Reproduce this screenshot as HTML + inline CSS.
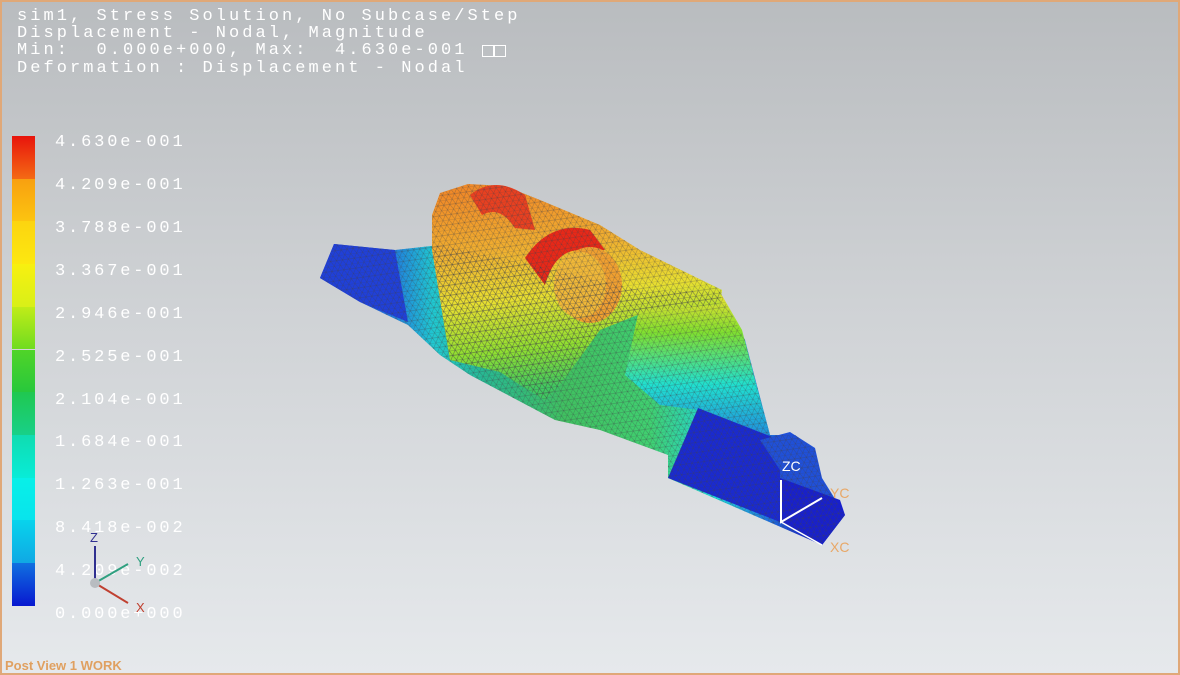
<!DOCTYPE html>
<html><head><meta charset="utf-8"><style>
html,body{margin:0;padding:0}
body{width:1180px;height:675px;overflow:hidden;position:relative;background:linear-gradient(#b9bcbf 0%,#cfd2d5 45%,#e6e9ec 100%);font-family:"Liberation Mono","DejaVu Sans Mono",monospace}
.frame{position:absolute;left:0;top:0;width:1176px;height:671px;border:2px solid #e0a878}
.hd{position:absolute;left:17px;color:#fff;font-size:17px;letter-spacing:3.05px;line-height:17px;white-space:pre}
.lb{position:absolute;left:55px;color:#fff;font-size:17px;letter-spacing:2.85px;white-space:pre}
.bar{position:absolute;left:12px;width:23px;height:42.7px}
</style></head><body>
<div class="frame"></div>
<div class="hd" style="top:8px">sim1, Stress Solution, No Subcase/Step</div>
<div class="hd" style="top:25px">Displacement - Nodal, Magnitude</div>
<div class="hd" style="top:42px">Min:  0.000e+000, Max:  4.630e-001</div>
<div style="position:absolute;left:482px;top:45px;width:10px;height:10px;border:1px solid #fff"></div>
<div style="position:absolute;left:494px;top:45px;width:10px;height:10px;border:1px solid #fff"></div>
<div class="hd" style="top:60px">Deformation : Displacement - Nodal</div>

<div class="bar" style="top:136px;background:linear-gradient(#e8140c,#f46a14)"></div>
<div class="bar" style="top:178.7px;background:linear-gradient(#f8a010,#fcc410)"></div>
<div class="bar" style="top:221.4px;background:linear-gradient(#fcd410,#fce810)"></div>
<div class="bar" style="top:264.1px;background:linear-gradient(#f8f010,#d8f018)"></div>
<div class="bar" style="top:306.8px;background:linear-gradient(#c0ec18,#70dc20)"></div>
<div class="bar" style="top:349.5px;background:linear-gradient(#50d428,#28c83c)"></div>
<div class="bar" style="top:392.2px;background:linear-gradient(#20c850,#18d088)"></div>
<div class="bar" style="top:434.9px;background:linear-gradient(#10dcb0,#08ecd8)"></div>
<div class="bar" style="top:477.6px;background:linear-gradient(#08f0e8,#08e4ec)"></div>
<div class="bar" style="top:520.3px;background:linear-gradient(#08d4ec,#10a8e4)"></div>
<div class="bar" style="top:563px;background:linear-gradient(#1070e0,#0818d0)"></div>

<div class="lb" style="top:133px">4.630e-001</div>
<div class="lb" style="top:176px">4.209e-001</div>
<div class="lb" style="top:219px">3.788e-001</div>
<div class="lb" style="top:262px">3.367e-001</div>
<div class="lb" style="top:305px">2.946e-001</div>
<div class="lb" style="top:348px">2.525e-001</div>
<div class="lb" style="top:391px">2.104e-001</div>
<div class="lb" style="top:433px">1.684e-001</div>
<div class="lb" style="top:476px">1.263e-001</div>
<div class="lb" style="top:519px">8.418e-002</div>
<div class="lb" style="top:562px">4.209e-002</div>
<div class="lb" style="top:605px">0.000e+000</div>

<svg width="1180" height="675" style="position:absolute;left:0;top:0">
<defs>
<linearGradient id="bd" gradientUnits="userSpaceOnUse" x1="330" y1="0" x2="800" y2="0">
<stop offset="0" stop-color="#1830d8"/>
<stop offset="0.12" stop-color="#2070e0"/>
<stop offset="0.22" stop-color="#20c8d0"/>
<stop offset="0.33" stop-color="#28b890"/>
<stop offset="0.5" stop-color="#40c060"/>
<stop offset="0.68" stop-color="#40d070"/>
<stop offset="0.82" stop-color="#20d8d8"/>
<stop offset="0.92" stop-color="#2080e0"/>
<stop offset="1" stop-color="#1830d0"/>
</linearGradient>
<linearGradient id="tp" gradientUnits="userSpaceOnUse" x1="0" y1="295" x2="0" y2="445">
<stop offset="0" stop-color="#e8e030"/>
<stop offset="0.25" stop-color="#80e030"/>
<stop offset="0.6" stop-color="#20e0d0"/>
<stop offset="1" stop-color="#2080e0"/>
</linearGradient>
<linearGradient id="hs" gradientUnits="userSpaceOnUse" x1="500" y1="190" x2="520" y2="390">
<stop offset="0" stop-color="#f08a28"/>
<stop offset="0.3" stop-color="#f0b030"/>
<stop offset="0.55" stop-color="#e8e030"/>
<stop offset="0.8" stop-color="#90e030"/>
<stop offset="1" stop-color="#40c860"/>
</linearGradient>
<pattern id="m" width="12" height="10" patternUnits="userSpaceOnUse" patternTransform="rotate(-8)">
<path d="M0 0H12M0 5H12M0 0L6 10M6 0L12 10M6 0L0 10M12 0L6 10" stroke="#404048" stroke-width="0.5" opacity="0.5" fill="none"/>
</pattern>
</defs>
<path d="M320 278L334 244L395 250L440 245L520 262L640 290L720 292L745 340L770 435L795 435L815 450L822 480L845 515L822 545L668 478L668 455L600 430L555 420L470 375L440 355L408 325L360 302Z" fill="url(#bd)"/>
<path d="M320 278L334 244L395 250L408 322L360 302Z" fill="#2040d8"/>
<path d="M640 305L720 292L742 330L755 380L770 435L740 430L700 410L660 405L625 375Z" fill="url(#tp)"/>
<path d="M432 215L440 193L468 184L505 186L540 200L600 225L640 250L722 290L720 305L650 310L600 330L560 385L545 400L520 385L500 372L450 360L443 318L432 250Z" fill="url(#hs)"/>
<path d="M470 195Q495 175 525 195L535 230L515 228Q500 205 482 215Z" fill="#e84020"/>
<path d="M525 258Q550 220 590 230L605 250L580 250Q555 250 545 285Z" fill="#e82818"/>
<ellipse cx="590" cy="285" rx="32" ry="38" fill="#f0a030"/>
<ellipse cx="580" cy="285" rx="26" ry="33" fill="#f0b838"/>
<path d="M698 408L780 440L780 522L668 478Z" fill="#1a2ad0"/>
<path d="M760 440L790 432L815 448L822 478L845 515L822 545L780 522L780 470Z" fill="#2050d8"/>
<path d="M780 478L840 500L845 515L822 545L780 522Z" fill="#1820cc"/>
<path d="M320 278L334 244L395 250L440 245L520 262L640 290L720 292L745 340L770 435L795 435L815 450L822 480L845 515L822 545L668 478L668 455L600 430L555 420L470 375L440 355L408 325L360 302Z" fill="url(#m)"/>
<path d="M432 215L440 193L468 184L505 186L540 200L600 225L640 250L722 290L720 305L650 310L600 330L560 385L545 400L520 385L500 372L450 360L443 318L432 250Z" fill="url(#m)"/>
<path d="M781 480V522L822 498" stroke="#fff" stroke-width="2" fill="none"/>
<path d="M781 522L822 545" stroke="#fff" stroke-width="1.5"/>
<g font-family="Liberation Sans,sans-serif" font-size="14">
<text x="782" y="471" fill="#fff">ZC</text>
<text x="830" y="498" fill="#e8a868">YC</text>
<text x="830" y="552" fill="#e8a868">XC</text>
</g>
<line x1="95" y1="583" x2="95" y2="546" stroke="#303090" stroke-width="2"/>
<line x1="95" y1="583" x2="128" y2="564" stroke="#30a080" stroke-width="2"/>
<line x1="95" y1="583" x2="128" y2="603" stroke="#c04030" stroke-width="2"/>
<circle cx="95" cy="583" r="5" fill="#b8bcc0"/>
<g font-family="Liberation Sans,sans-serif" font-size="13">
<text x="90" y="542" fill="#303090">Z</text>
<text x="136" y="566" fill="#30a080">Y</text>
<text x="136" y="612" fill="#c04030">X</text>
</g>
</svg>
<div style="position:absolute;left:5px;top:658px;font:bold 13px 'Liberation Sans',sans-serif;color:#e0a060">Post View 1 WORK</div>
</body></html>
